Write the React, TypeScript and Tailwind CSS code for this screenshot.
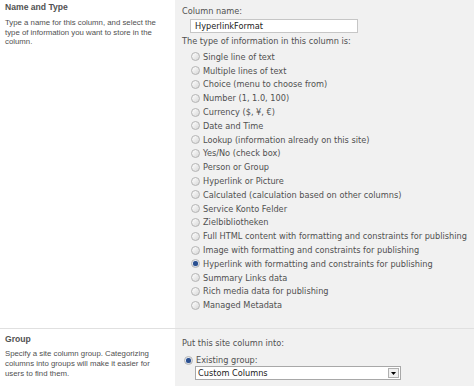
import React from 'react';

const options = [
  'Single line of text',
  'Multiple lines of text',
  'Choice (menu to choose from)',
  'Number (1, 1.0, 100)',
  'Currency ($, ¥, €)',
  'Date and Time',
  'Lookup (information already on this site)',
  'Yes/No (check box)',
  'Person or Group',
  'Hyperlink or Picture',
  'Calculated (calculation based on other columns)',
  'Service Konto Felder',
  'Zielbibliotheken',
  'Full HTML content with formatting and constraints for publishing',
  'Image with formatting and constraints for publishing',
  'Hyperlink with formatting and constraints for publishing',
  'Summary Links data',
  'Rich media data for publishing',
  'Managed Metadata',
];

const Radio: React.FC<{ checked?: boolean }> = ({ checked }) => (
  <span className="w-[9px] h-[9px] rounded-full border border-[#b4b4b4] bg-gradient-to-br from-[#ffffff] to-[#d8d8d8] flex items-center justify-center shrink-0">
    {checked && <span className="w-[5px] h-[5px] rounded-full bg-[#2a4f8f] shadow-[0_0_1px_#6a8fd0]" />}
  </span>
);

const verdana = { fontFamily: '"DejaVu Sans", Verdana, sans-serif' };
const tahoma = { fontFamily: '"Liberation Sans", Tahoma, Arial, sans-serif' };

export default function App() {
  return (
    <div className="w-[474px] h-[386px] overflow-hidden bg-white text-[#505050]">
      {/* Name and Type */}
      <div className="flex h-[328px]">
        <div className="w-[175px] shrink-0 bg-white pl-[5px] pt-[2px]" style={tahoma}>
          <h3 className="text-[8.6px] leading-[10px] font-bold text-[#525252]">Name and Type</h3>
          <p className="mt-[6px] text-[7.8px] leading-[9.5px] pr-[8px]">
            Type a name for this column, and select the type of information you want to store in the column.
          </p>
        </div>
        <div className="flex-1 bg-[#f1f1f1] pl-[7px] pt-[6px]" style={verdana}>
          <div className="text-[8.2px] leading-[11px]">Column name:</div>
          <div className="ml-[8px] mt-[2px] w-[168px] h-[14px] bg-white border border-[#c6c6c6] flex items-center pl-[4px] text-[8.2px] text-[#222]">
            HyperlinkFormat
          </div>
          <div className="mt-[3px] text-[8.2px] leading-[11px]">The type of information in this column is:</div>
          <div className="mt-[3px] flex flex-col">
            {options.map((o, i) => (
              <div key={o} className="h-[13.8px] flex items-center gap-[3px] pl-[9px] text-[8.2px] whitespace-nowrap">
                <Radio checked={i === 15} />
                <span>{o}</span>
              </div>
            ))}
          </div>
        </div>
      </div>

      {/* Group */}
      <div className="flex h-[58px] border-t border-[#e0e0e0]">
        <div className="w-[175px] shrink-0 bg-white pl-[5px] pt-[5px]" style={tahoma}>
          <h3 className="text-[8.6px] leading-[10px] font-bold text-[#525252]">Group</h3>
          <p className="mt-[5px] text-[7.8px] leading-[10px] pr-[12px]">
            Specify a site column group. Categorizing columns into groups will make it easier for users to find them.
          </p>
        </div>
        <div className="flex-1 bg-[#f1f1f1] pl-[7px] pt-[9px]" style={verdana}>
          <div className="text-[8.2px] leading-[11px]">Put this site column into:</div>
          <div className="mt-[6px] flex items-center gap-[3px] pl-[2px] h-[11px] text-[8.2px]">
            <Radio checked />
            <span>Existing group:</span>
          </div>
          <div className="ml-[13px] w-[206px] h-[14px] bg-white border border-[#a8a8a8] flex items-center justify-between pl-[2px] pr-[1px] text-[8.2px] text-[#222]">
            <span>Custom Columns</span>
            <span className="w-[11px] h-[10px] border border-[#b0b0b0] bg-[#f0f0f0] flex items-center justify-center">
              <svg width="5" height="3" viewBox="0 0 5 3"><path d="M0 0h5L2.5 3z" fill="#000" /></svg>
            </span>
          </div>
        </div>
      </div>
    </div>
  );
}
